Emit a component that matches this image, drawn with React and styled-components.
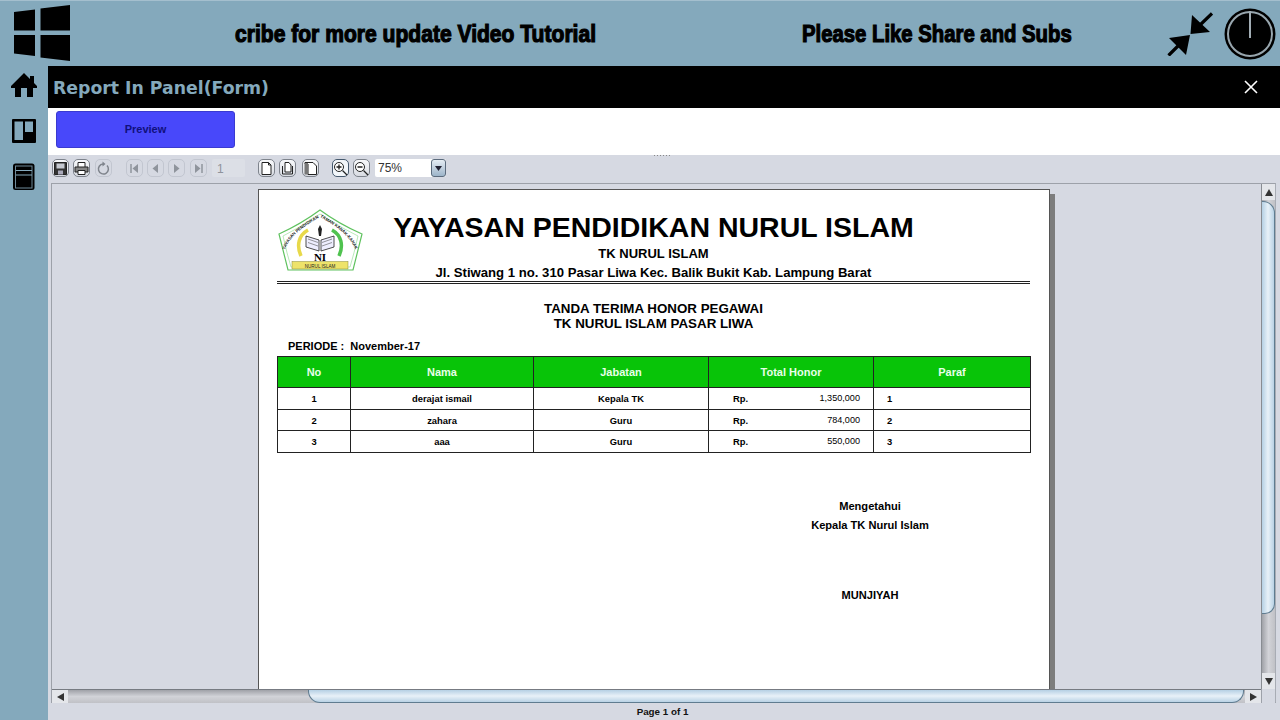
import React from "react";
import styled, { createGlobalStyle } from "styled-components";

const Global = createGlobalStyle`
  html, body { margin: 0; padding: 0; width: 1280px; height: 720px; overflow: hidden; background: #84a9bc; }
  #root { width: 1280px; height: 720px; }
  * { box-sizing: border-box; }
`;

const Shell = styled.div`
  width: 1280px; height: 720px; display: grid;
  grid-template-columns: 48px 1fr; grid-template-rows: 66px 1fr;
  background: #84a9bc; font-family: "Liberation Sans", Arial, sans-serif; overflow: hidden;
`;
const Header = styled.header`
  grid-column: 1 / 3; display: flex; align-items: center; padding: 0 4px 0 14px; border-top: 1px solid #a4bfce;
`;
const Marquee = styled.div`
  font-family: "Liberation Sans", Arial, sans-serif; font-weight: 700; font-size: 24px; color: #000;
  -webkit-text-stroke: 1.2px #000; white-space: nowrap;
  margin-left: ${p => p.$left}px; width: ${p => p.$width}px; transform-origin: left center;
  transform: scaleX(${p => p.$squeeze});
`;
const Spacer = styled.div`flex: 1;`;
const Sidebar = styled.nav`
  display: flex; flex-direction: column; align-items: center; padding-top: 7px; gap: 20px;
`;
const Main = styled.main`display: flex; flex-direction: column; min-width: 0; background: #d6d9e2;`;
const TitleBar = styled.div`
  height: 42px; background: #000; display: flex; align-items: center; justify-content: space-between;
  padding: 0 20px 0 5px; flex: none;
`;
const Title = styled.h1`
  margin: 0; font: 700 17.3px "DejaVu Sans", Verdana, sans-serif; color: #84a9bc; position: relative; top: 1px;
`;
const CloseBtn = styled.button`
  all: unset; width: 18px; height: 18px; display: flex; align-items: center; justify-content: center;
`;
const ActionStrip = styled.div`
  height: 47px; background: #fff; padding: 3px 0 0 8px; flex: none;
`;
const PreviewBtn = styled.button`
  width: 179px; height: 37px; border: 1px solid #3a3ad0; border-radius: 3px; background: #4848fa;
  color: #10107c; font: 700 11px "Liberation Sans", Arial, sans-serif; padding: 0 0 2px;
`;
const Toolbar = styled.div`
  height: 28px; flex: none; display: flex; align-items: center; padding: 0 0 2px 4px; position: relative;
  &::before {
    content: ""; position: absolute; left: 606px; top: 0; width: 18px; height: 1px;
    background: repeating-linear-gradient(90deg, #888 0 1px, transparent 1px 3px);
  }
`;
const ToolBtn = styled.div`
  width: 17px; height: 18px; flex: none; margin-left: ${p => p.$gap || 0}px; display: flex; align-items: center; justify-content: center;
  border: 1px solid ${p => (p.$active ? "#46596e" : p.$muted ? "#c2c6d0" : "#7e838c")};
  border-radius: 5px; background: ${p => (p.$active ? "#f2f6fa" : p.$muted ? "#d6d9e2" : "linear-gradient(#f8f9fb, #d8dbe2)")};
`;
const PageInput = styled.div`
  width: 33px; height: 18px; margin-left: 5px; background: #dcdfe6; color: #8f939b; font-size: 12px;
  padding: 3px 0 0 5px; border-radius: 2px; flex: none;
`;
const ZoomCombo = styled.div`
  margin-left: 5px; width: 71px; height: 18px; background: #fff; display: flex; justify-content: space-between; flex: none;
  font-size: 12px; color: #333; padding-left: 3px; align-items: center; border-radius: 2px;
`;
const ComboArrow = styled.div`
  width: 15px; height: 18px; border: 1px solid #5b6a7c; border-radius: 3px;
  background: linear-gradient(#e6edf4, #9db4c9); display: flex; align-items: center; justify-content: center;
`;
const Viewer = styled.div`
  flex: none; height: 520px; margin: 0 4px 0 3px; display: grid; grid-template-columns: 1fr 14px; grid-template-rows: 505px 14px;
  border: 1px solid #9da1a9; border-right-color: #a8acb4;
`;
const ScrollArea = styled.div`overflow: hidden; padding: 5px 0 0 206px;`;
const Page = styled.article`
  width: 792px; height: 700px; background: #fff; border: 1px solid #555; box-shadow: 5px 5px 0 #7d7d7d;
  padding: 18px 19px 0 18px; color: #000;
`;
const Letterhead = styled.div`
  display: grid; grid-template-columns: 87px 1fr 87px; height: 74px; margin-bottom: -1px;
`;
const Logo = styled.svg`display: block; width: 87px; height: 67px; margin-top: 1px;`;
const Heads = styled.div`text-align: center; white-space: nowrap;`;
const Org = styled.div`font-weight: 700; font-size: 28.5px; line-height: 32px; margin-top: 3px;`;
const School = styled.div`font-weight: 700; font-size: 13px; line-height: 14px; margin-top: 4px;`;
const Address = styled.div`font-weight: 700; font-size: 13.15px; line-height: 14px; margin-top: 5px;`;
const DoubleRule = styled.div`height: 3px; border-top: 1px solid #222; border-bottom: 1px solid #222;`;
const DocTitle = styled.div`
  text-align: center; font-weight: 700; font-size: 13.35px; line-height: 15px; margin-top: ${p => p.$top || 0}px;
`;
const Period = styled.div`
  font-weight: 700; font-size: 11px; line-height: 13px; margin: 9px 0 3px 11px;
`;
const Table = styled.table`
  width: 753px; border-collapse: collapse; table-layout: fixed; font-size: 9.4px; font-weight: 700;
  th { background: #08c408; color: #e8ffe8; font-size: 11px; height: 31px; border: 1px solid #222; padding: 0; }
  td { border: 1px solid #222; height: 21.7px; text-align: center; padding: 0; }
`;
const Money = styled.div`display: flex; justify-content: space-between; padding: 0 13px 0 24px;`;
const Amount = styled.span`font-weight: 400; font-size: 9.1px;`;
const Paraf = styled.div`text-align: left; padding-left: 13px;`;
const SignBlock = styled.div`
  width: 200px; margin: 47px 0 0 493px; text-align: center; font-weight: 700; font-size: 11.1px;
`;
const SignLine = styled.div`line-height: 13px; margin-top: ${p => p.$top || 0}px;`;
const VTrack = styled.div`
  display: flex; flex-direction: column; background: linear-gradient(90deg, #a0a2a8, #d2d3d8 50%, #c0c1c6);
  border-left: 1px solid #888c92;
`;
const ArrowBtn = styled.div`
  flex: none; width: ${p => p.$w}px; height: ${p => p.$h}px; display: flex; align-items: center; justify-content: center;
  background: #e4e6ea; color: #333;
`;
const VThumb = styled.div`
  margin-top: 1px; height: 413px; flex: none; border: 1px solid #5f7c90; border-width: 1px 1px 1px 0; border-radius: 0 0 10px 0;
  border-top-right-radius: 12px; background: linear-gradient(90deg, #b5d0e4, #e8f1f8 50%, #b9d2e5);
`;
const TrackFill = styled.div`flex: 1;`;
const HTrack = styled.div`
  display: flex; background: linear-gradient(#a0a2a8, #d2d3d8 50%, #c0c1c6); border-top: 1px solid #777b82;
`;
const HThumb = styled.div`
  flex: none; width: 936px; border: 1px solid #5f7c90; border-width: 0 1px 1px 1px; border-radius: 0 0 12px 12px;
  background: linear-gradient(#b5d0e4, #e8f1f8 50%, #b9d2e5); margin-left: 240px;
`;
const Corner = styled.div`background: #d6d9e2; border-left: 1px solid #9da1a9;`;
const Status = styled.div`
  flex: 1; text-align: center; font-weight: 700; font-size: 9.8px; color: #111; padding-top: 3px; padding-right: 3px;
`;

const Win = () => (
  <svg width="57" height="57" viewBox="14 5 57 57">
    <path d="M14 12 L35 9.500 V30.500 H14Z M40.500 8.500 L70 5 V30.500 H40.500Z M14 35 H35 V56 L14 53.500Z M40.500 35 H70 V61 L40.500 57.500Z" fill="#000"/>
  </svg>
);
const Compress = () => (
  <svg width="46" height="44" viewBox="1168 10 46 44">
    <path d="M1193 13 L1191.500 32 L1211 30Z M1170 36 L1191 33 L1187 53Z" fill="#000"/>
    <path d="M1213 11.500 L1200 24 M1169.500 53.500 L1181 42" stroke="#000" strokeWidth="3.200"/>
  </svg>
);
const Power = () => (
  <svg width="52" height="52" viewBox="1225 6 52 52" style={{ marginLeft: 11 }}>
    <circle cx="1251" cy="32" r="25.500" fill="#000"/>
    <circle cx="1251" cy="32" r="22" fill="none" stroke="#98a6ae" strokeWidth="2"/>
    <path d="M1251 9 V36" stroke="#a2adb4" strokeWidth="2"/>
  </svg>
);
const Home = () => (
  <svg width="26" height="26" viewBox="12 73 26 26">
    <path d="M12 86 L25 73 L31 79 V76 H35 V83 L38 86 V88 H34 V97 H28 V88 H22 V97 H16 V88 H12Z" fill="#000"/>
  </svg>
);
const Board = () => (
  <svg width="24" height="24" viewBox="13 118 24 24">
    <rect x="13" y="118" width="24" height="24" rx="1" fill="#000"/>
    <rect x="15.500" y="120.500" width="8.500" height="18.500" fill="#84a9bc"/>
    <rect x="26" y="120.500" width="8" height="10.500" fill="#84a9bc"/>
  </svg>
);
const Ledger = () => (
  <svg width="22" height="28" viewBox="14 161 22 28">
    <rect x="14" y="161.500" width="21.500" height="26.500" rx="2.500" fill="#000"/>
    <rect x="16.500" y="164" width="16.500" height="22" fill="none" stroke="#6f8a99" strokeWidth="1"/>
    <path d="M17 168.500 H33 M17 173 H33" stroke="#84a9bc" strokeWidth="1.100"/>
  </svg>
);
const Ico = ({ children }) => (
  <svg width="15" height="15" viewBox="0 0 15 15" fill="none" stroke="#222" strokeWidth="1">{children}</svg>
);
const muted = "#8f949c";

const LogoArt = () => (
  <Logo viewBox="0 0 87 67">
    <defs>
      <path id="arc" d="M8 40 C14 26 26 18 43 8 C60 18 72 26 78 40"/>
    </defs>
    <path d="M43 1 Q62 15 85 25 Q80 45 76 61 H11 Q7 45 2 25 Q24 15 43 1Z" fill="#fff" stroke="#5fc25f" strokeWidth="1.200"/>
    <path d="M43 5 Q60 17 81 27 Q77 45 73 58 H14 Q10 45 6 27 Q26 17 43 5Z" fill="none" stroke="#9be09b" strokeWidth=".7"/>
    <text fontSize="4.300" fontWeight="700" fill="#222">
      <textPath href="#arc" startOffset="50%" textAnchor="middle">YAYASAN PENDIDIKAN TAMAN KANAK-KANAK</textPath>
    </text>
    <path d="M24 47 C19 36 22 26 31 21" stroke="#e8d94a" strokeWidth="3.500" fill="none"/>
    <path d="M62 47 C67 36 64 26 55 21" stroke="#4fc24f" strokeWidth="3.500" fill="none"/>
    <path d="M29 27 L42 31 V42 L29 38Z M57 27 L44 31 V42 L57 38Z" fill="#eef" stroke="#222" strokeWidth=".8"/>
    <path d="M31 30 L41 33.500 M31 33.500 L41 37 M55 30 L45 33.500 M55 33.500 L45 37" stroke="#555" strokeWidth=".6"/>
    <path d="M43 16 L45 20 L44 27 H42 L41 20Z" fill="#222"/>
    <text x="43" y="51.500" fontSize="11" fontWeight="700" fontFamily="Liberation Serif, serif" textAnchor="middle" fill="#000">NI</text>
    <rect x="15" y="52.500" width="56" height="7.500" fill="#eee36a" stroke="#8a8a3a" strokeWidth=".5"/>
    <text x="43" y="58.500" fontSize="4.600" textAnchor="middle" fill="#222">NURUL ISLAM</text>
  </Logo>
);

const rows = [
  ["1", "derajat ismail", "Kepala TK", "1,350,000"],
  ["2", "zahara", "Guru", "784,000"],
  ["3", "aaa", "Guru", "550,000"],
];

export default function App() {
  return (
    <Shell>
      <Global />
      <Header>
        <Win />
        <Marquee $left={164} $width={567} $squeeze={0.878}>cribe for more update Video Tutorial</Marquee>
        <Marquee $left={0} $width={300} $squeeze={0.846}>Please Like Share and Subs</Marquee>
        <Spacer />
        <Compress />
        <Power />
      </Header>
      <Sidebar>
        <Home />
        <Board />
        <Ledger />
      </Sidebar>
      <Main>
        <TitleBar>
          <Title>Report In Panel(Form)</Title>
          <CloseBtn aria-label="close">
            <svg width="16" height="16" viewBox="0 0 16 16"><path d="M2 2 L14 14 M14 2 L2 14" stroke="#fff" strokeWidth="1.600"/></svg>
          </CloseBtn>
        </TitleBar>
        <ActionStrip><PreviewBtn>Preview</PreviewBtn></ActionStrip>
        <Toolbar>
          <ToolBtn><Ico><path d="M1.500 1.500 H13.500 V13.500 H1.500Z" fill="#333"/><rect x="3.500" y="2.500" width="8" height="5" fill="#c6c9d0" stroke="none"/><rect x="5" y="9.500" width="5" height="4" fill="#aab" stroke="none"/></Ico></ToolBtn>
          <ToolBtn $gap={4}><Ico><path d="M4 6 V1.500 H11 V6" fill="#fff"/><path d="M1 6 H14 V11 H1Z" fill="#888"/><path d="M4 9.500 H11 V13.500 H4Z" fill="#fff"/></Ico></ToolBtn>
          <ToolBtn $gap={5} $muted><Ico><path d="M11 4.500 A5 5 0 1 1 7 3" stroke="#7f848c" strokeWidth="1.500"/><path d="M6.500 .5 L9.500 3 L6.500 5.500Z" fill="#7f848c" stroke="none"/></Ico></ToolBtn>
          <ToolBtn $gap={14} $muted><Ico><path d="M4 3 V12" stroke={muted} strokeWidth="1.500"/><path d="M11 3 L5.500 7.500 L11 12Z" fill={muted} stroke="none"/></Ico></ToolBtn>
          <ToolBtn $gap={4} $muted><Ico><path d="M10 3 L4.500 7.500 L10 12Z" fill={muted} stroke="none"/></Ico></ToolBtn>
          <ToolBtn $gap={4} $muted><Ico><path d="M5 3 L10.500 7.500 L5 12Z" fill={muted} stroke="none"/></Ico></ToolBtn>
          <ToolBtn $gap={5} $muted><Ico><path d="M11 3 V12" stroke={muted} strokeWidth="1.500"/><path d="M4 3 L9.500 7.500 L4 12Z" fill={muted} stroke="none"/></Ico></ToolBtn>
          <PageInput>1</PageInput>
          <ToolBtn $gap={13}><Ico><path d="M3 1.500 H9.500 L12 4 V13.500 H3Z M9.500 1.500 V4 H12" fill="#fff"/></Ico></ToolBtn>
          <ToolBtn $gap={4}><Ico><path d="M5 1.500 H9 L11 4 V11 H5Z M2.500 13 H12.500 M2.500 13 V5 M12.500 13 V5" fill="#fff"/></Ico></ToolBtn>
          <ToolBtn $gap={6}><Ico><path d="M2 1.500 H10 L13.500 5 V13.500 H5 V3 H2Z" fill="#fff"/><rect x="1.500" y="2" width="3.500" height="11.500" fill="#777" stroke="none"/></Ico></ToolBtn>
          <ToolBtn $gap={13} $active><Ico><circle cx="6" cy="6" r="4.500" fill="#fff"/><path d="M3.500 6 H8.500 M6 3.500 V8.500 M9.500 9.500 L14 14" strokeWidth="1.300"/></Ico></ToolBtn>
          <ToolBtn $gap={4}><Ico><circle cx="6" cy="6" r="4.500" fill="#fff"/><path d="M3.500 6 H8.500 M9.500 9.500 L14 14" strokeWidth="1.300"/></Ico></ToolBtn>
          <ZoomCombo>
            75%
            <ComboArrow><svg width="7" height="5" viewBox="0 0 7 5"><path d="M0 0 H7 L3.500 5Z" fill="#223"/></svg></ComboArrow>
          </ZoomCombo>
        </Toolbar>
        <Viewer>
          <ScrollArea>
            <Page>
              <Letterhead>
                <LogoArt />
                <Heads>
                  <Org>YAYASAN PENDIDIKAN NURUL ISLAM</Org>
                  <School>TK NURUL ISLAM</School>
                  <Address>Jl. Stiwang 1 no. 310 Pasar Liwa Kec. Balik Bukit Kab. Lampung Barat</Address>
                </Heads>
              </Letterhead>
              <DoubleRule />
              <DocTitle $top={17}>TANDA TERIMA HONOR PEGAWAI</DocTitle>
              <DocTitle>TK NURUL ISLAM PASAR LIWA</DocTitle>
              <Period>PERIODE :&nbsp; November-17</Period>
              <Table>
                <colgroup>
                  <col width="73" /><col width="183" /><col width="175" /><col width="165" /><col width="157" />
                </colgroup>
                <thead>
                  <tr><th>No</th><th>Nama</th><th>Jabatan</th><th>Total Honor</th><th>Paraf</th></tr>
                </thead>
                <tbody>
                  {rows.map(r => (
                    <tr key={r[0]}>
                      <td>{r[0]}</td><td>{r[1]}</td><td>{r[2]}</td>
                      <td><Money><span>Rp.</span><Amount>{r[3]}</Amount></Money></td>
                      <td><Paraf>{r[0]}</Paraf></td>
                    </tr>
                  ))}
                </tbody>
              </Table>
              <SignBlock>
                <SignLine>Mengetahui</SignLine>
                <SignLine $top={6}>Kepala TK Nurul Islam</SignLine>
                <SignLine $top={57}>MUNJIYAH</SignLine>
              </SignBlock>
            </Page>
          </ScrollArea>
          <VTrack>
            <ArrowBtn $w={13} $h={16}><svg width="8" height="7" viewBox="0 0 8 7"><path d="M4 0 L8 7 H0Z" fill="#333"/></svg></ArrowBtn>
            <VThumb />
            <TrackFill />
            <ArrowBtn $w={13} $h={16}><svg width="8" height="7" viewBox="0 0 8 7"><path d="M0 0 H8 L4 7Z" fill="#333"/></svg></ArrowBtn>
          </VTrack>
          <HTrack>
            <ArrowBtn $w={16} $h={13}><svg width="7" height="8" viewBox="0 0 7 8"><path d="M7 0 V8 L0 4Z" fill="#333"/></svg></ArrowBtn>
            <HThumb />
            <TrackFill />
            <ArrowBtn $w={16} $h={13}><svg width="7" height="8" viewBox="0 0 7 8"><path d="M0 0 V8 L7 4Z" fill="#333"/></svg></ArrowBtn>
          </HTrack>
          <Corner />
        </Viewer>
        <Status>Page 1 of 1</Status>
      </Main>
    </Shell>
  );
}
